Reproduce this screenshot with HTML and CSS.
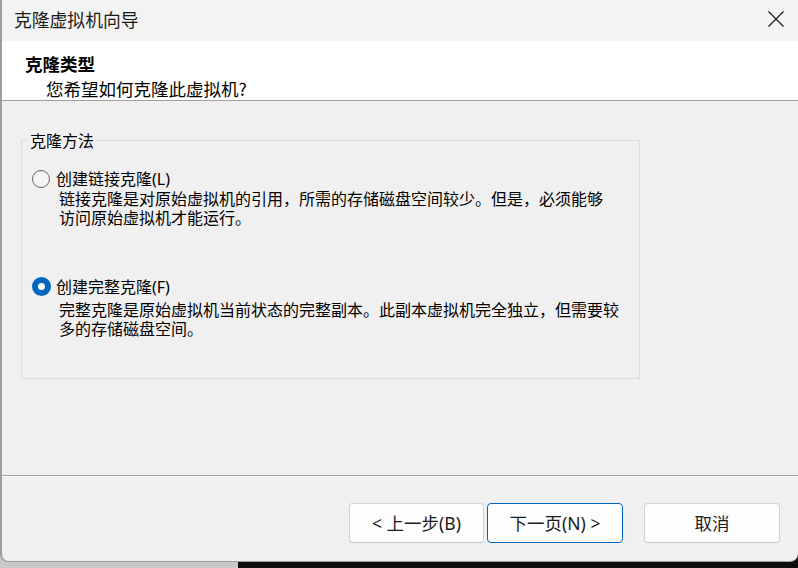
FILE: index.html
```html
<!DOCTYPE html>
<html lang="zh-CN">
<head>
<meta charset="utf-8">
<title>克隆虚拟机向导</title>
<link rel="stylesheet" href="styles.css">
</head>
<body>
<div class="screen">
  <div class="window">
    <div class="titlebar">
      <span class="title">克隆虚拟机向导</span>
      <svg class="close" width="16" height="16" viewBox="0 0 16 16" aria-hidden="true">
        <path d="M0.5 0.5 L15.5 15.5 M15.5 0.5 L0.5 15.5" stroke="#1a1a1a" stroke-width="1.2" fill="none"/>
      </svg>
    </div>
    <div class="header">
      <div class="h-title">克隆类型</div>
      <div class="h-sub">您希望如何克隆此虚拟机?</div>
    </div>
    <div class="content">
      <fieldset class="group">
        <legend class="legend">克隆方法</legend>
        <div class="group-body">
          <div class="option">
            <div class="opt-row"><span class="radio"></span><span class="opt-label">创建链接克隆(L)</span></div>
            <div class="opt-desc">链接克隆是对原始虚拟机的引用，所需的存储磁盘空间较少。但是，必须能够<br>访问原始虚拟机才能运行。</div>
          </div>
          <div class="option option-second">
            <div class="opt-row"><span class="radio radio-checked"></span><span class="opt-label">创建完整克隆(F)</span></div>
            <div class="opt-desc opt-desc-second">完整克隆是原始虚拟机当前状态的完整副本。此副本虚拟机完全独立，但需要较<br>多的存储磁盘空间。</div>
          </div>
        </div>
      </fieldset>
    </div>
    <div class="footer">
      <button class="btn">&lt; 上一步(B)</button>
      <button class="btn btn-primary">下一页(N) &gt;</button>
      <button class="btn btn-cancel">取消</button>
    </div>
  </div>
  <div class="taskbar"></div>
</div>
</body>
</html>
```
FILE: styles.css
```css
* { box-sizing: border-box; }
html, body { margin: 0; padding: 0; }
body {
  width: 798px;
  height: 568px;
  overflow: hidden;
  font-family: "Noto Sans", "Noto Sans CJK SC", sans-serif;
  color: #000;
}
.screen {
  width: 798px;
  height: 568px;
  display: flex;
  flex-direction: column;
  background: linear-gradient(to right, #c9c9c9 238px, #0d0d0d 238px);
}
.window {
  height: 562px;
  display: flex;
  flex-direction: column;
  background: #f0f0f0;
  border-left: 2px solid #9e9e9e;
  border-bottom: 1px solid #9a9a9a;
  border-radius: 0 0 8px 8px;
  overflow: hidden;
}
.titlebar {
  height: 41px;
  flex: none;
  background: #f3f3f3;
  display: flex;
  align-items: center;
  justify-content: space-between;
  padding: 0 14px 4px 12px;
}
.title {
  font-family: "Noto Sans CJK SC", sans-serif;
  font-size: 17.8px;
  line-height: 24px;
  color: #1a1a1a;
}
.close { display: block; }
.header {
  height: 60px;
  flex: none;
  background: #fff;
  border-bottom: 1px solid #a0a0a0;
  padding: 9.5px 0 0 23px;
  font-family: "Noto Sans CJK SC", sans-serif;
  font-size: 17.5px;
  line-height: 25px;
}
.h-title { font-weight: bold; }
.h-sub { padding-left: 21px; }
.content {
  flex: 1;
  padding: 29px 0 0 19px;
}
.group {
  margin: 0;
  padding: 0;
  width: 619px;
  border: 1px solid #dcdcdc;
  font-family: "Noto Sans CJK SC", sans-serif;
  font-size: 16px;
}
.legend {
  margin-left: 6px;
  padding: 0 2px;
  line-height: 20px;
  font-size: 16px;
}
.group-body {
  padding: 18.5px 0 40px 10px;
}
.option-second { margin-top: 50px; }
.opt-row {
  display: flex;
  align-items: center;
  height: 20px;
}
.radio {
  width: 18px;
  height: 18px;
  border-radius: 50%;
  border: 1px solid #666;
  background: #f6f6f6;
  margin-right: 6px;
  flex: none;
}
.radio-checked {
  width: 19px;
  height: 19px;
  border: 6px solid #0067c0;
  background: #fff;
  margin-right: 5px;
}
.opt-label {
  font-family: "Noto Sans", "Noto Sans CJK SC", sans-serif;
  font-size: 16px;
  line-height: 20px;
  white-space: nowrap;
}
.opt-desc {
  padding-left: 27px;
  line-height: 19px;
  white-space: nowrap;
  margin-top: 0;
}
.opt-desc-second { margin-top: 3px; }
.footer {
  height: 86px;
  flex: none;
  border-top: 1px solid #a0a0a0;
  box-shadow: inset 0 1px 0 #fff;
  display: flex;
  justify-content: flex-end;
  align-items: flex-start;
  padding: 27px 18px 0 0;
}
.btn {
  width: 135px;
  height: 40px;
  margin: 0;
  padding: 0;
  background: #fdfdfd;
  border: 1px solid #d2d2d2;
  border-bottom-color: #c4c4c4;
  border-radius: 4px;
  font-family: "Noto Sans", "Noto Sans CJK SC", sans-serif;
  font-size: 17.5px;
  line-height: 24px;
  color: #1b1b1b;
}
.btn-primary {
  width: 136px;
  margin-left: 3px;
  border: 1px solid #0067c0;
}
.btn-cancel {
  width: 136px;
  margin-left: 21px;
}
.taskbar { height: 6px; flex: none; }
```
